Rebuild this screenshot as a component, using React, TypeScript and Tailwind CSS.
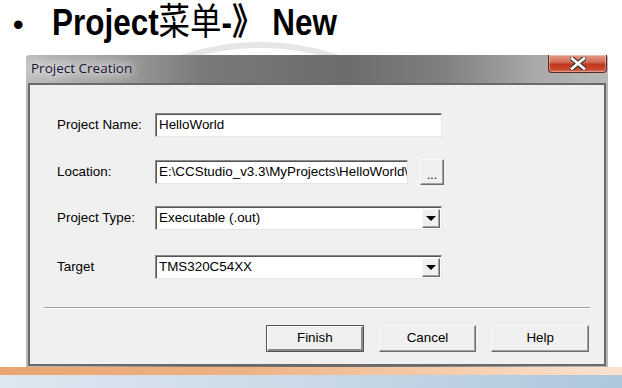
import React from "react";

const sunken =
  "border border-t-[#8a8a8a] border-l-[#8a8a8a] border-b-[#e6e6e6] border-r-[#e6e6e6] shadow-[inset_1px_1px_0_#555]";

function DropArrow() {
  return (
    <div className="w-[18px] h-[19px] bg-[#f0f0f0] border border-t-[#f8f8f8] border-l-[#f8f8f8] border-b-[#6a6a6a] border-r-[#6a6a6a] shadow-[inset_-1px_-1px_0_#a0a0a0] flex items-center justify-center">
      <svg width="10" height="5" viewBox="0 0 10 5">
        <polygon points="0,0 10,0 5,5" fill="#000" />
      </svg>
    </div>
  );
}

function Button({ label, def }: { label: string; def?: boolean }) {
  return (
    <div
      className={
        "w-[98px] h-[27px] flex items-center justify-center text-[13.4px] text-black bg-[#f0f0f0] " +
        (def
          ? "border border-[#555] shadow-[inset_1px_1px_0_#fff,inset_-2px_-2px_0_#888]"
          : "border border-t-[#fafafa] border-l-[#fafafa] border-b-[#6d6d6d] border-r-[#6d6d6d] shadow-[inset_-1px_-1px_0_#a0a0a0]")
      }
    >
      {label}
    </div>
  );
}

export default function App() {
  return (
    <div
      className="w-[622px] h-[388px] bg-white relative overflow-hidden flex flex-col"
      style={{ fontFamily: '"Liberation Sans", Arial, sans-serif' }}
    >
      {/* faint watermark arc */}
      <svg className="absolute left-[150px] top-[30px]" width="220" height="40" viewBox="0 0 220 40">
        <path d="M5 38 Q110 -8 215 38" stroke="#e6e6e6" strokeWidth="6" fill="none" />
      </svg>

      {/* Heading */}
      <div className="relative h-[55px] flex items-start shrink-0">
        <span className="absolute left-[13px] top-[2px] text-[30px] font-bold text-black">•</span>
        <div
          className="absolute left-[52px] top-[-1px] text-[37px] font-bold text-black whitespace-nowrap origin-left [transform:scaleX(0.85)] leading-[48px]"
          style={{ fontFamily: '"Liberation Sans", "Noto Sans CJK SC", sans-serif' }}
        >
          Project<span className="font-normal">菜单</span>-》 New
        </div>
      </div>

      {/* Window */}
      <div className="relative ml-[26px] w-[582px] h-[312px] shrink-0 flex flex-col bg-[linear-gradient(90deg,#bdbdbd_0%,#a2a2a2_14%,#7a7a7a_30%,#6c6c6c_55%,#808080_72%,#aaaaaa_88%,#b8b8b8_100%)] rounded-t-[3px]">
        {/* Title bar */}
        <div className="h-[28px] flex items-center pl-[5px] relative">
          <span
            className="text-[13.5px] text-[#16163a] [text-shadow:0_0_8px_#fff,0_0_12px_#fff,0_0_16px_#eee] mt-[-1px]"
            style={{ fontFamily: '"Open Sans", "Noto Sans", sans-serif' }}
          >
            Project Creation
          </span>
          <div className="absolute right-[1px] top-0 w-[59px] h-[18px] rounded-b-[4px] border border-[#5a2a22] border-t-0 bg-[linear-gradient(180deg,#e49a88_0%,#d5705a_40%,#c2381f_55%,#c8442a_80%,#d56c55_100%)] flex items-center justify-center shadow-[inset_0_0_0_1px_rgba(255,255,255,0.35)]">
            <svg width="16" height="13" viewBox="0 0 16 13">
              <path d="M2 1.5 L14 11.5 M14 1.5 L2 11.5" stroke="#3a3a3a" strokeWidth="5" strokeLinecap="square" />
              <path d="M2 1.5 L14 11.5 M14 1.5 L2 11.5" stroke="#ffffff" strokeWidth="2.6" strokeLinecap="square" />
            </svg>
          </div>
        </div>

        {/* Client area */}
        <div className="flex-1 mx-[2px] mb-[1px] border-2 border-[#6a6a6a] bg-[#f0f0f0] flex flex-col text-[13.4px] text-black pl-[27px] pr-[15px]">
          <div className="flex items-center mt-[28px] h-[24px]">
            <div className="w-[98px]">Project Name:</div>
            <div className={"w-[287px] h-[24px] bg-white flex items-center pl-[3px] " + sunken}>HelloWorld</div>
          </div>
          <div className="flex items-center mt-[23px] h-[24px]">
            <div className="w-[98px]">Location:</div>
            <div className={"w-[253px] h-[24px] bg-white flex items-center pl-[3px] overflow-hidden whitespace-nowrap " + sunken}>
              E:\CCStudio_v3.3\MyProjects\HelloWorld\
            </div>
            <div className="ml-[12px] w-[24px] h-[26px] bg-[#f0f0f0] border border-t-[#fafafa] border-l-[#fafafa] border-b-[#6d6d6d] border-r-[#6d6d6d] shadow-[inset_-1px_-1px_0_#a0a0a0] flex items-center justify-center text-[12px] leading-none pt-[5px]">
              ...
            </div>
          </div>
          <div className="flex items-center mt-[22px] h-[24px]">
            <div className="w-[98px]">Project Type:</div>
            <div className={"w-[287px] h-[24px] bg-white flex items-center justify-between pl-[3px] pr-[1px] " + sunken}>
              <span>Executable (.out)</span>
              <DropArrow />
            </div>
          </div>
          <div className="flex items-center mt-[25px] h-[24px]">
            <div className="w-[98px]">Target</div>
            <div className={"w-[287px] h-[24px] bg-white flex items-center justify-between pl-[3px] pr-[1px] " + sunken}>
              <span>TMS320C54XX</span>
              <DropArrow />
            </div>
          </div>
          <div className="mt-[28px] ml-[-13px] w-[546px] h-[2px] border-t border-t-[#a0a0a0] border-b border-b-[#ffffff]" />
          <div className="flex mt-[16px] ml-[209px] gap-[15px]">
            <Button label="Finish" def />
            <Button label="Cancel" />
            <Button label="Help" />
          </div>
        </div>
      </div>

      {/* Bottom stripes */}
      <div className="h-[8px] shrink-0 bg-[linear-gradient(90deg,#e9a570_0%,#eeb385_40%,#f6cfb0_75%,#fbe3d2_100%)]" />
      <div className="flex-1 bg-[linear-gradient(90deg,#dde7f1_0%,#c9d9e7_50%,#adc6dc_100%)]" />
    </div>
  );
}
